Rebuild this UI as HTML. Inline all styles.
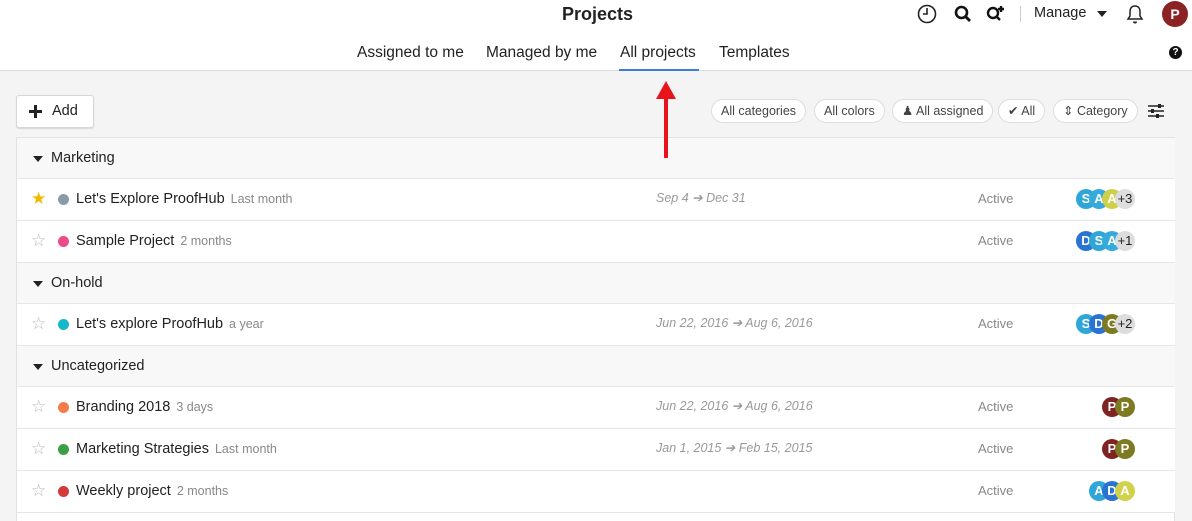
<!DOCTYPE html>
<html><head><meta charset="utf-8"><style>
*{box-sizing:border-box;margin:0;padding:0}
body{width:1192px;height:521px;overflow:hidden;background:#f4f4f4;font-family:"Liberation Sans",sans-serif;color:#222;position:relative}
.top{position:absolute;left:0;top:0;width:1192px;height:71px;background:#fff;border-bottom:1px solid #ddd}
.abs{position:absolute;white-space:nowrap}
.tab{font-size:15.5px;color:#222;top:44px}
.pill{position:absolute;top:99px;height:24px;border:1px solid #ddd;border-radius:12px;background:#fff;font-size:12.5px;color:#444;line-height:22px;padding:0 9px;white-space:nowrap}
.panel{position:absolute;left:16px;top:137px;width:1159px;height:384px;background:#fff;border:1px solid #e2e2e2;border-bottom:none}
.row{position:absolute;left:0;width:1158px;border-bottom:1px solid #e6e6e6}
.cat{background:#f8f8f8;height:41px}
.cat .t{position:absolute;left:34px;top:12px;font-size:14.5px;color:#222}
.cat .caret{position:absolute;left:16px;top:18px;border-left:5px solid transparent;border-right:5px solid transparent;border-top:6px solid #222}
.proj{height:42px;background:#fff}
.proj .star{position:absolute;left:14px;top:10px;font-size:17px;color:#bbb;line-height:20px}
.proj .dot{position:absolute;left:41px;top:15px;width:11px;height:11px;border-radius:50%}
.proj .n{position:absolute;left:59px;top:12px;font-size:14.5px;color:#222;white-space:nowrap}
.proj .n span{font-size:12.5px;color:#888;margin-left:6px}
.proj .d{position:absolute;left:639px;top:11px;font-size:12.5px;color:#999;font-style:italic;white-space:nowrap}
.proj .s{position:absolute;left:961px;top:12px;font-size:13px;color:#888}
.av{position:absolute;top:10px;width:20px;height:20px;border-radius:50%;color:#fff;font-size:13px;font-weight:bold;text-align:center;line-height:20px}
.pl{background:#ddd;color:#222;font-weight:normal}
</style></head><body>
<div class="top"></div>
<div class="abs" style="left:562px;top:4px;font-size:18px;font-weight:bold">Projects</div>
<div class="abs tab" style="left:357px">Assigned to me</div>
<div class="abs tab" style="left:486px">Managed by me</div>
<div class="abs tab" style="left:620px">All projects</div>
<div class="abs" style="left:619px;top:69px;width:80px;height:2px;background:#3b7ddd"></div>
<div class="abs tab" style="left:719px">Templates</div>
<svg class="abs" style="left:916px;top:3px" width="22" height="22" viewBox="0 0 22 22"><circle cx="11" cy="11" r="8.5" fill="none" stroke="#222" stroke-width="1.6"/><path d="M11 5v6H7" fill="none" stroke="#222" stroke-width="1.6"/></svg>
<svg class="abs" style="left:953px;top:4px" width="20" height="20" viewBox="0 0 20 20"><circle cx="8.5" cy="8.5" r="5.5" fill="none" stroke="#111" stroke-width="2.6"/><path d="M12.5 12.5l4.5 4.5" stroke="#111" stroke-width="2.8"/></svg>
<svg class="abs" style="left:985px;top:4px" width="22" height="20" viewBox="0 0 22 20"><circle cx="8" cy="9" r="5" fill="none" stroke="#111" stroke-width="2.4"/><path d="M11 12l4 4M13 5h6M16 2v6" stroke="#111" stroke-width="2.4"/></svg>
<div class="abs" style="left:1020px;top:6px;width:1px;height:16px;background:#ccc"></div>
<div class="abs" style="left:1034px;top:5px;font-size:14.5px">Manage</div>
<div class="abs" style="left:1097px;top:11px;border-left:5px solid transparent;border-right:5px solid transparent;border-top:6px solid #222"></div>
<svg class="abs" style="left:1125px;top:3px" width="20" height="22" viewBox="0 0 20 22"><path d="M10 3c-3.5 0-5 2.5-5 5.5v4.5l-2 3h14l-2-3V8.5C15 5.5 13.5 3 10 3z" fill="none" stroke="#222" stroke-width="1.5"/><path d="M8 18.5a2 2 0 0 0 4 0" fill="#222"/></svg>
<div class="abs" style="left:1162px;top:1px;width:26px;height:26px;border-radius:50%;background:#8b2324;color:#fff;font-weight:bold;font-size:14px;text-align:center;line-height:26px">P</div>
<div class="abs" style="left:1169px;top:46px;width:13px;height:13px;border-radius:50%;background:#111;color:#fff;font-size:10px;font-weight:bold;text-align:center;line-height:13px">?</div>
<div class="abs" style="left:16px;top:95px;width:78px;height:33px;background:#fff;border:1px solid #d6d6d6;border-radius:3px;box-shadow:0 1px 1px rgba(0,0,0,.12)"></div>
<svg class="abs" style="left:29px;top:105px" width="13" height="13" viewBox="0 0 13 13"><path d="M6.5 0v13M0 6.5h13" stroke="#222" stroke-width="3"/></svg>
<div class="abs" style="left:52px;top:103px;font-size:14.5px">Add</div>
<div class="pill" style="left:711px">All categories</div>
<div class="pill" style="left:814px">All colors</div>
<div class="pill" style="left:892px">&#9823; All assigned</div>
<div class="pill" style="left:998px">&#10004; All</div>
<div class="pill" style="left:1053px">&#8661; Category</div>
<svg class="abs" style="left:1147px;top:103px" width="18" height="16" viewBox="0 0 18 16"><path d="M1 3h16M1 8h16M1 13h16" stroke="#222" stroke-width="1.5"/><rect x="11" y="1" width="3" height="4" fill="#222"/><rect x="4" y="6" width="3" height="4" fill="#222"/><rect x="9" y="11" width="3" height="4" fill="#222"/></svg>

<div class="panel">
<div class="row cat" style="top:0"><div class="caret"></div><div class="t">Marketing</div></div>
<div class="row proj" style="top:41px"><div class="star" style="color:#f5b800">★</div><div class="dot" style="background:#8a9ba8"></div><div class="n">Let's Explore ProofHub<span>Last month</span></div><div class="d">Sep 4 ➔ Dec 31</div><div class="s">Active</div>
<div class="av" style="left:1059px;background:#2ea7d8">S</div><div class="av" style="left:1072px;background:#35aadb">A</div><div class="av" style="left:1085px;background:#cfd04a">A</div><div class="av pl" style="left:1098px">+3</div></div>
<div class="row proj" style="top:83px"><div class="star">☆</div><div class="dot" style="background:#ea4c89"></div><div class="n">Sample Project<span>2 months</span></div><div class="s">Active</div>
<div class="av" style="left:1059px;background:#2b73d0">D</div><div class="av" style="left:1072px;background:#2ea7d8">S</div><div class="av" style="left:1085px;background:#35aadb">A</div><div class="av pl" style="left:1098px">+1</div></div>
<div class="row cat" style="top:125px"><div class="caret"></div><div class="t">On-hold</div></div>
<div class="row proj" style="top:166px"><div class="star">☆</div><div class="dot" style="background:#14b8c8"></div><div class="n">Let's explore ProofHub<span>a year</span></div><div class="d">Jun 22, 2016 ➔ Aug 6, 2016</div><div class="s">Active</div>
<div class="av" style="left:1059px;background:#2ea7d8">S</div><div class="av" style="left:1072px;background:#2b73d0">D</div><div class="av" style="left:1085px;background:#7d7a22">G</div><div class="av pl" style="left:1098px">+2</div></div>
<div class="row cat" style="top:208px"><div class="caret"></div><div class="t">Uncategorized</div></div>
<div class="row proj" style="top:249px"><div class="star">☆</div><div class="dot" style="background:#f47c48"></div><div class="n">Branding 2018<span>3 days</span></div><div class="d">Jun 22, 2016 ➔ Aug 6, 2016</div><div class="s">Active</div>
<div class="av" style="left:1085px;background:#7f2222">P</div><div class="av" style="left:1098px;background:#7d7a22">P</div></div>
<div class="row proj" style="top:291px"><div class="star">☆</div><div class="dot" style="background:#3e9e44"></div><div class="n">Marketing Strategies<span>Last month</span></div><div class="d">Jan 1, 2015 ➔ Feb 15, 2015</div><div class="s">Active</div>
<div class="av" style="left:1085px;background:#7f2222">P</div><div class="av" style="left:1098px;background:#7d7a22">P</div></div>
<div class="row proj" style="top:333px"><div class="star">☆</div><div class="dot" style="background:#d33a3a"></div><div class="n">Weekly project<span>2 months</span></div><div class="s">Active</div>
<div class="av" style="left:1072px;background:#2ea7d8">A</div><div class="av" style="left:1085px;background:#2b73d0">D</div><div class="av" style="left:1098px;background:#d1d24c">A</div></div>
</div>
<div class="abs" style="left:664px;top:96px;width:4px;height:62px;background:#e8141c;z-index:5"></div>
<div class="abs" style="left:656px;top:81px;border-left:10px solid transparent;border-right:10px solid transparent;border-bottom:18px solid #e8141c;z-index:5"></div>
</body></html>
